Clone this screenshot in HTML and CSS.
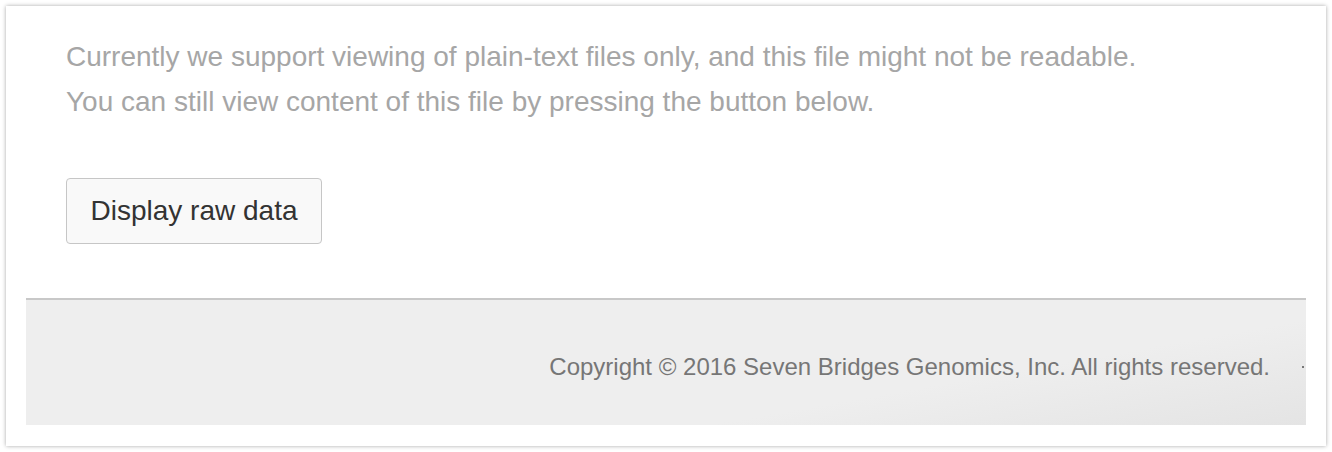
FILE: index.html
```html
<!DOCTYPE html>
<html>
<head>
<meta charset="utf-8">
<link rel="stylesheet" href="styles.css">
</head>
<body>
<div class="card">
  <div class="content">
    <p class="msg">Currently we support viewing of plain-text files only, and this file might not be readable.</p>
    <p class="msg">You can still view content of this file by pressing the button below.</p>
    <button class="btn">Display raw data</button>
  </div>
  <footer class="footer">
    <span class="copy">Copyright © 2016 Seven Bridges Genomics, Inc. All rights reserved.</span>
    <span class="dot"></span>
  </footer>
</div>
</body>
</html>
```
FILE: styles.css
```css
html, body {
  margin: 0;
  padding: 0;
  background: #ffffff;
}
body {
  padding: 6px;
  font-family: "Liberation Sans", Arial, Helvetica, sans-serif;
}
.card {
  width: 1320px;
  height: 440px;
  box-sizing: border-box;
  background: #fff;
  box-shadow: 0 0 4px rgba(0, 0, 0, 0.35);
  padding: 0 20px;
  display: flex;
  flex-direction: column;
}
.content {
  padding: 28px 0 0 40px;
  height: 292px;
  box-sizing: border-box;
}
.msg {
  margin: 0;
  font-size: 28px;
  line-height: 45px;
  color: #a6a6a6;
}
.btn {
  display: block;
  margin-top: 54px;
  width: 256px;
  height: 66px;
  box-sizing: border-box;
  border: 1px solid #c6c6c6;
  border-radius: 4px;
  background: #f9f9f9;
  font-family: "Liberation Sans", Arial, Helvetica, sans-serif;
  font-size: 28px;
  color: #333;
  padding: 0;
}
.footer {
  height: 127px;
  box-sizing: border-box;
  border-top: 2px solid #c8c8c8;
  background: linear-gradient(170deg, #eeeeee 70%, #e4e4e4 100%);
  display: flex;
  align-items: center;
  justify-content: flex-end;
  padding: 8px 2px 0 0;
}
.copy {
  font-size: 24px;
  color: #767676;
}
.dot {
  width: 2px;
  height: 2px;
  background: #777;
  margin-left: 32px;
}
```
